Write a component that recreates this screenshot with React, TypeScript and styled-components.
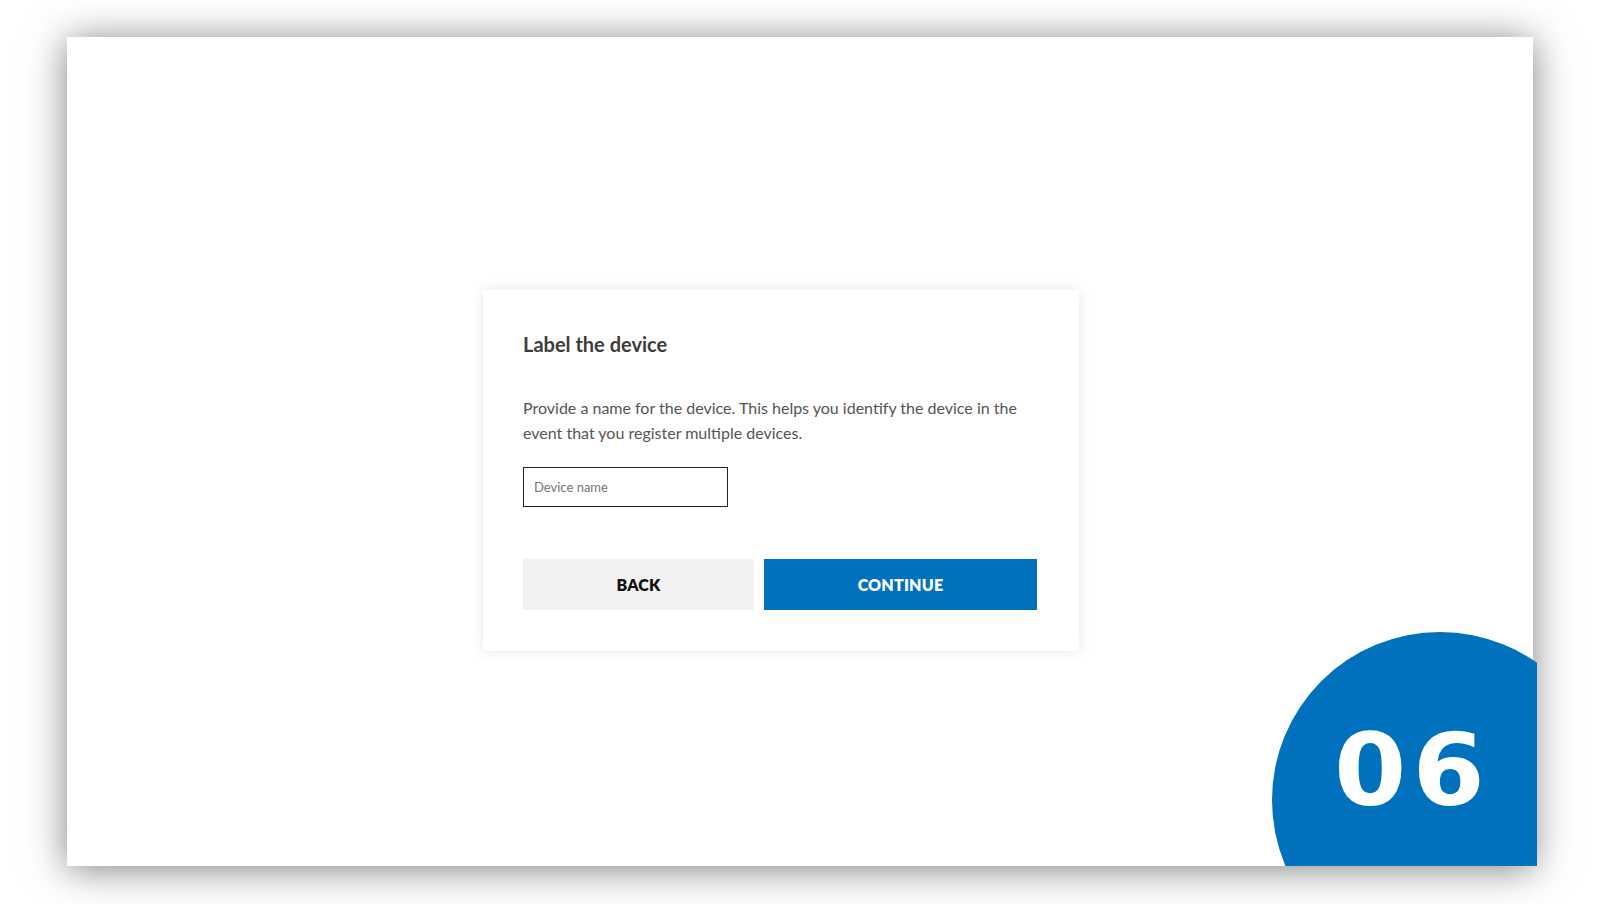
import React from "react";
import styled, { createGlobalStyle } from "styled-components";

const GlobalStyle = createGlobalStyle`
  html, body {
    margin: 0;
    padding: 0;
    background: #ffffff;
  }
  body {
    font-family: Lato, "Liberation Sans", sans-serif;
  }
`;

const Page = styled.div`
  width: 1600px;
  height: 904px;
  padding: 37px 67px 0;
  box-sizing: border-box;
`;

const Slide = styled.div`
  position: relative;
  width: 1466px;
  height: 829px;
  background: #ffffff;
  box-shadow: 0 3px 36px rgba(0, 0, 0, 0.5);
  padding: 253px 0 0 416px;
  box-sizing: border-box;
`;

const Card = styled.div`
  width: 596px;
  height: 361px;
  box-sizing: border-box;
  background: #ffffff;
  box-shadow: 0 0 12px rgba(0, 0, 0, 0.1);
  padding: 40px 42px 41px 40px;
  display: flex;
  flex-direction: column;
`;

const Title = styled.h2`
  margin: 0;
  font-size: 20px;
  font-weight: 700;
  color: #3c3c3c;
  line-height: 28px;
`;

const Text = styled.p`
  margin: 37px 0 0;
  font-size: 16px;
  line-height: 25px;
  color: #555555;
`;

const Input = styled.input`
  margin-top: 22px;
  width: 205px;
  height: 40px;
  box-sizing: border-box;
  border: 1.5px solid #222222;
  border-radius: 0;
  padding: 0 10px;
  font-family: inherit;
  font-size: 13px;
  color: #333;
  outline: none;
  &::placeholder {
    color: #777777;
  }
`;

const Actions = styled.div`
  margin-top: 52px;
  display: flex;
  gap: 10px;
`;

const Button = styled.button<{ $primary?: boolean; $width: number }>`
  width: ${({ $width }) => $width}px;
  height: 51px;
  border: none;
  border-radius: 0;
  font-family: inherit;
  font-size: 16px;
  font-weight: 800;
  letter-spacing: 0.2px;
  text-transform: uppercase;
  cursor: pointer;
  background: ${({ $primary }) => ($primary ? "#0071bc" : "#f2f2f2")};
  color: ${({ $primary }) => ($primary ? "#ffffff" : "#111111")};
`;

const BadgeClip = styled.div`
  position: absolute;
  right: -4px;
  bottom: 0;
  width: 265px;
  height: 234px;
  overflow: hidden;
`;

const BadgeCircle = styled.div`
  width: 336px;
  height: 336px;
  border-radius: 50%;
  background: #0071bc;
  display: flex;
  justify-content: flex-start;
  align-items: flex-start;
  box-sizing: border-box;
  padding: 89px 0 0 62px;
`;

const BadgeNumber = styled.span`
  font-family: "DejaVu Sans", sans-serif;
  font-weight: 700;
  font-size: 100px;
  line-height: 1;
  color: #ffffff;
  letter-spacing: 6px;
  transform: scaleX(1.04);
  transform-origin: left center;
`;

export default function App() {
  return (
    <>
      <GlobalStyle />
      <Page>
        <Slide>
          <Card>
            <Title>Label the device</Title>
            <Text>
              Provide a name for the device. This helps you identify the device in the
              event that you register multiple devices.
            </Text>
            <Input placeholder="Device name" />
            <Actions>
              <Button $width={231}>Back</Button>
              <Button $primary $width={273}>Continue</Button>
            </Actions>
          </Card>
          <BadgeClip>
            <BadgeCircle>
              <BadgeNumber>06</BadgeNumber>
            </BadgeCircle>
          </BadgeClip>
        </Slide>
      </Page>
    </>
  );
}
